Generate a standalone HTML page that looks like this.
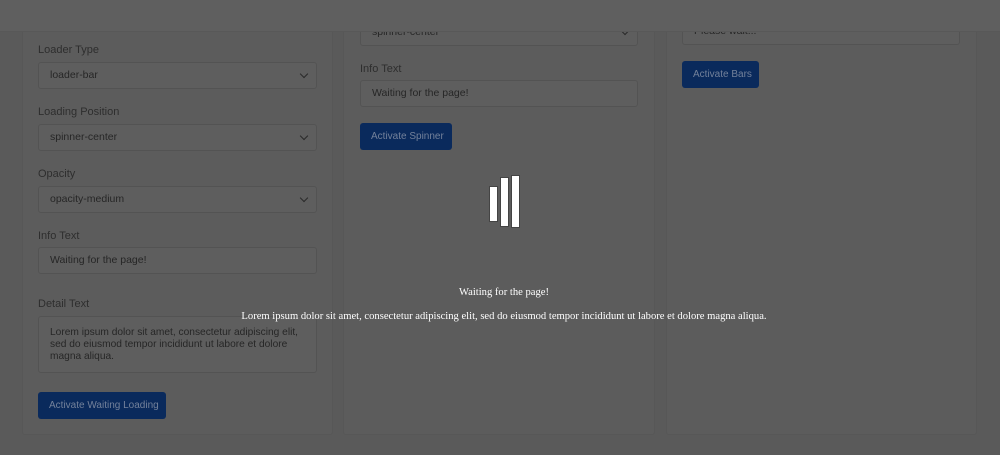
<!DOCTYPE html>
<html><head><style>
*{box-sizing:border-box;margin:0;padding:0}
body{width:1000px;height:455px;background:#5a5a5a;font-family:"Liberation Sans",sans-serif;position:relative;overflow:hidden;color:#2b2b2b;font-size:11px}
.hdr{position:absolute;left:0;top:0;width:1000px;height:32px;background:#5f5f5f;border-bottom:1px solid #585858;z-index:2}
.card{position:absolute;top:20px;background:#5c5c5c;border:1px solid #575757;border-radius:3px}
.lbl{position:absolute;font-size:11px;color:#2e2e2e}
.inp{position:absolute;height:27px;border:1px solid #535353;border-radius:3px;background:#5e5e5e;padding:0 11px;line-height:25px;font-size:10.5px;color:#262626}
.chev{position:absolute;right:9px;top:8px;width:6px;height:6px;border-right:1.3px solid #2a2a2a;border-bottom:1.3px solid #2a2a2a;transform:rotate(45deg)}
.btn{position:absolute;height:27px;background:#0a2a5c;border-radius:3px;color:#73819a;font-size:10px;line-height:27px;padding:0 11px;white-space:nowrap}
.bar{position:absolute;background:#fff;border:1px solid #444}
.ov{position:absolute;color:#fff;font-family:"Liberation Serif",serif;font-size:10.6px;width:1000px;text-align:center}
</style></head><body>
<div class="card" style="left:22px;width:311px;height:415px"></div>
<div class="card" style="left:343px;width:312px;height:415px"></div>
<div class="card" style="left:666px;width:311px;height:415px"></div>

<div class="lbl" style="left:38px;top:44px">Loader Type</div>
<div class="inp" style="left:38px;top:62px;width:279px">loader-bar<span class="chev"></span></div>
<div class="lbl" style="left:38px;top:106px">Loading Position</div>
<div class="inp" style="left:38px;top:124px;width:279px">spinner-center<span class="chev"></span></div>
<div class="lbl" style="left:38px;top:168px">Opacity</div>
<div class="inp" style="left:38px;top:186px;width:279px">opacity-medium<span class="chev"></span></div>
<div class="lbl" style="left:38px;top:230px">Info Text</div>
<div class="inp" style="left:38px;top:247px;width:279px">Waiting for the page!</div>
<div class="lbl" style="left:38px;top:298px">Detail Text</div>
<div class="inp" style="left:38px;top:316px;width:279px;height:57px;line-height:12px;padding:10px 2px 0 11px;font-size:10.2px">Lorem ipsum dolor sit amet, consectetur adipiscing elit, sed do eiusmod tempor incididunt ut labore et dolore magna aliqua.</div>
<div class="btn" style="left:38px;top:392px;width:128px">Activate Waiting Loading</div>

<div class="inp" style="left:360px;top:19px;width:278px">spinner-center<span class="chev"></span></div>
<div class="lbl" style="left:360px;top:63px">Info Text</div>
<div class="inp" style="left:360px;top:80px;width:278px">Waiting for the page!</div>
<div class="btn" style="left:360px;top:123px;width:92px">Activate Spinner</div>

<div class="inp" style="left:682px;top:18px;width:278px">Please wait...</div>
<div class="btn" style="left:682px;top:61px;width:77px">Activate Bars</div>
<div class="hdr"></div>

<div class="bar" style="left:489px;top:186px;width:9px;height:36px"></div>
<div class="bar" style="left:500px;top:177px;width:9px;height:50px"></div>
<div class="bar" style="left:511px;top:175px;width:9px;height:53px"></div>
<div class="ov" style="left:4px;top:287px">Waiting for the page!</div>
<div class="ov" style="left:4px;top:311px">Lorem ipsum dolor sit amet, consectetur adipiscing elit, sed do eiusmod tempor incididunt ut labore et dolore magna aliqua.</div>
</body></html>
